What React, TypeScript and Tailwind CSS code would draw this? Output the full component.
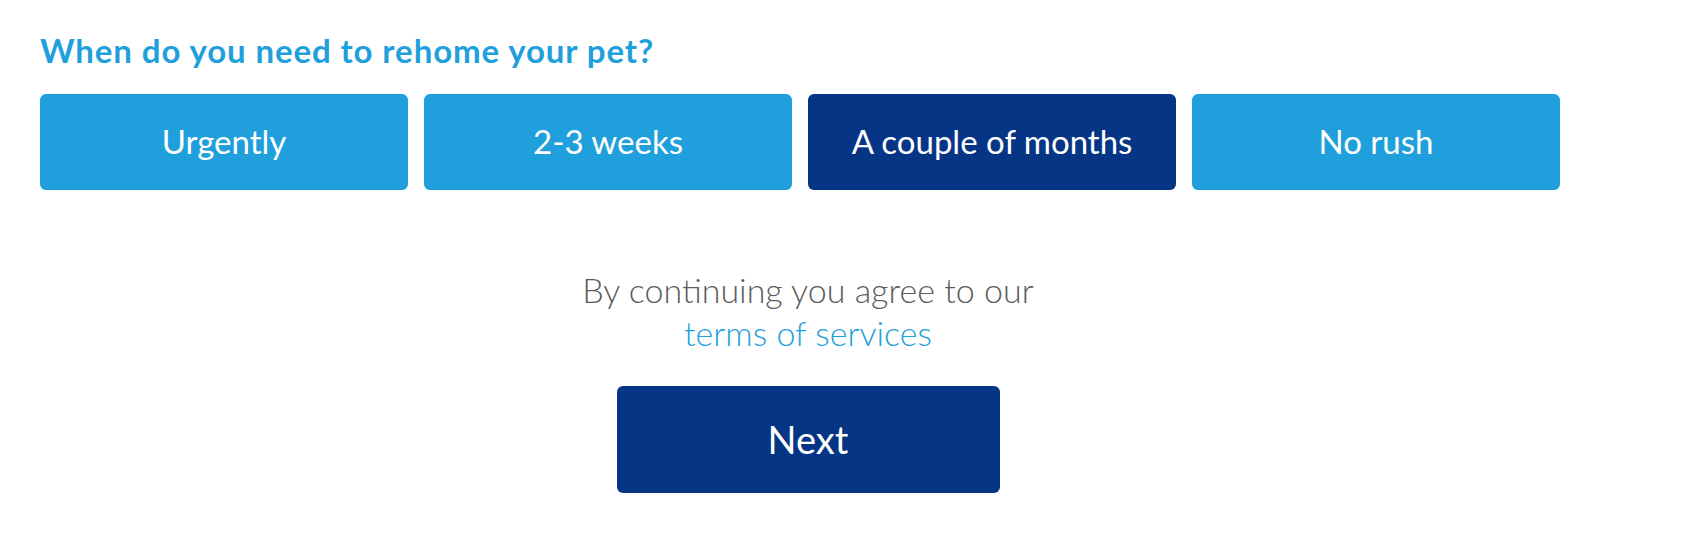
import React from "react";

const options = ["Urgently", "2-3 weeks", "A couple of months", "No rush"];

export default function App() {
  const selected = 2;
  return (
    <div className="min-h-[542px] bg-white pl-[40px] pt-[32px]" style={{ fontFamily: "Lato, 'Open Sans', sans-serif" }}>
      <h2 className="text-[33px] leading-[36px] font-bold tracking-[0.9px] text-[#1fa0dc]">When do you need to rehome your pet?</h2>
      <div className="mt-[26px] flex gap-[16px]">
        {options.map((o, i) => (
          <button
            key={o}
            className={`flex h-[96px] w-[368px] items-center justify-center rounded-[6px] text-[33px] text-white ${
              i === selected ? "bg-[#063585]" : "bg-[#1fa0dc]"
            }`}
          >
            {o}
          </button>
        ))}
      </div>
      <div className="flex w-[1536px] flex-col items-center">
        <p className="mt-[78px] text-center text-[34px] leading-[43px] font-light text-[#5b5b5b]">
          By continuing you agree to our
          <br />
          <a className="text-[#1fa0dc]">terms of services</a>
        </p>
        <button className="mt-[32px] flex h-[107px] w-[383px] items-center justify-center rounded-[6px] bg-[#063585] text-[38px] text-white">
          Next
        </button>
      </div>
    </div>
  );
}
